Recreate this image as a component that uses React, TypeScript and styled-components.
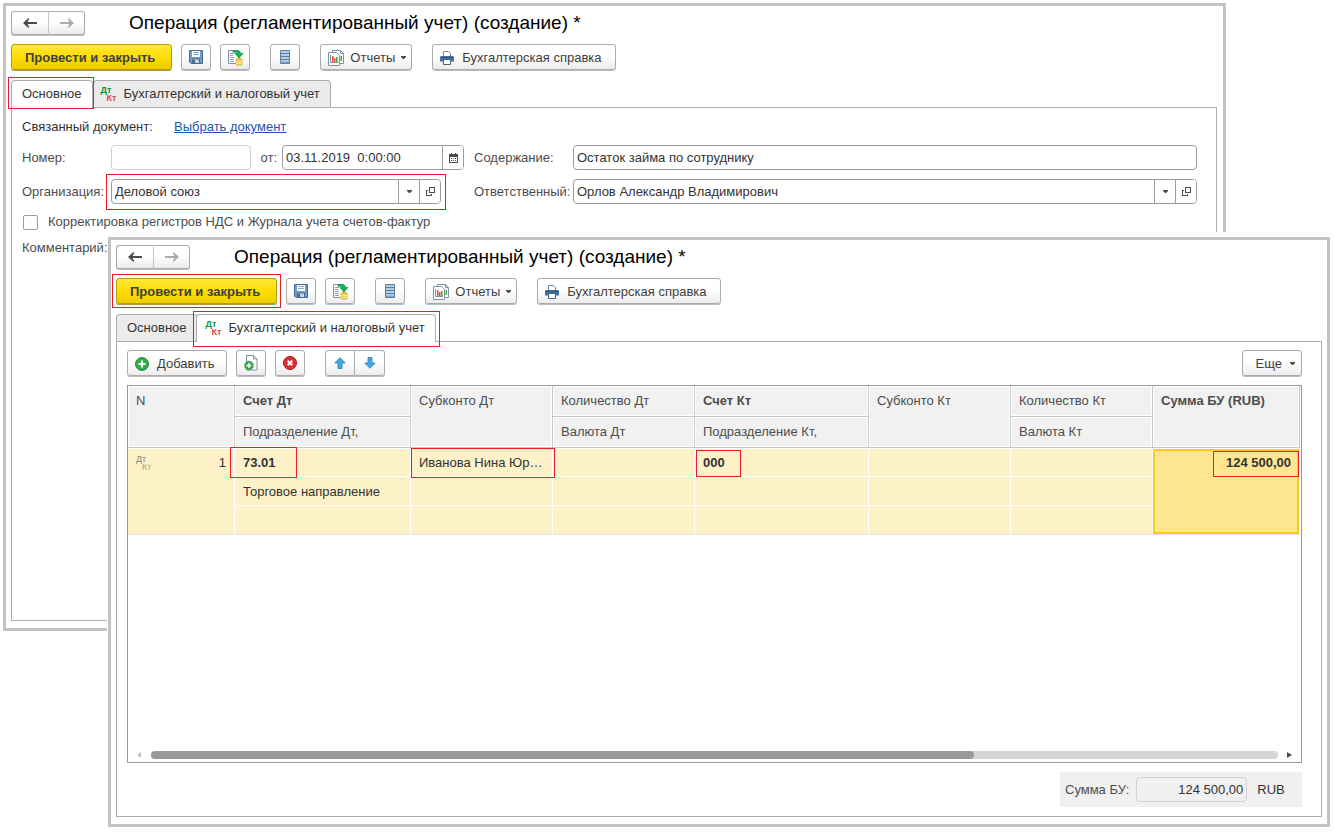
import React from "react";
import styled, { createGlobalStyle, css } from "styled-components";

const GlobalStyle = createGlobalStyle`
  *, *::before, *::after { box-sizing: border-box; }
  body { margin: 0; background: #fff; }
  body, button, input {
    font-family: "Liberation Sans", Arial, sans-serif;
    font-size: 13px;
    line-height: 16px;
    color: #404040;
  }
  svg { display: block; flex: none; }
`;

/* ---------- windows ---------- */

const Desktop = styled.main`
  display: grid;
  align-items: start;
  padding: 3px 4px 5px 3px;
`;

const WindowFrame = styled.section<{ $front?: boolean }>`
  grid-area: 1 / 1;
  min-width: 0;
  border: 3px solid #c3c3c3;
  background: #fff;
  padding: 4px 5px 7px;
  ${(p) =>
    p.$front
      ? css`
          margin: 234px 0 0 105px;
          box-shadow: 0 -4px 0 1px #fff;
          z-index: 1;
        `
      : css`
          margin-right: 104px;
          padding-right: 6px;
        `}
`;

const TitleBar = styled.header`
  display: flex;
  align-items: center;
  gap: 44px;
  height: 25px;
  margin-bottom: 9px;
`;

const Title = styled.h1`
  margin: 0;
  font-size: 19px;
  line-height: 24px;
  font-weight: 400;
  color: #000;
  white-space: nowrap;
`;

/* ---------- buttons ---------- */

const Button = styled.button<{ $primary?: boolean; $square?: boolean }>`
  display: flex;
  align-items: center;
  justify-content: ${(p) => (p.$square ? "center" : "flex-start")};
  gap: 8px;
  flex: none;
  height: 26px;
  width: ${(p) => (p.$square ? "30px" : "auto")};
  padding: ${(p) => (p.$square ? "0" : "1px 13px 0 7px")};
  border: 1px solid #ababab;
  border-radius: 3px;
  background: linear-gradient(#fff 45%, #ececec);
  box-shadow: 0 1px 0 #bdbdbd;
  white-space: nowrap;
  ${(p) =>
    p.$primary &&
    css`
      padding: 1px 16px 0 13px;
      border-color: #b89c00;
      background: linear-gradient(#ffe838, #fcdc00 55%, #eccb00);
      box-shadow: 0 1px 0 #a89a50;
      font-weight: 700;
    `}
`;

const ButtonGroup = styled.div`
  display: flex;
  & > button {
    border-radius: 3px 0 0 3px;
  }
  & > button + button {
    border-left: 0;
    border-radius: 0 3px 3px 0;
  }
`;

const NavGroup = styled(ButtonGroup)`
  & > button {
    width: 38px;
    height: 24px;
    border-right-color: #c6c6c6;
  }
  & > button + button {
    width: 36px;
    border-right-color: #ababab;
  }
`;

const Toolbar = styled.div`
  display: flex;
  gap: 20px;
  height: 26px;
`;

const CommandBar = styled(Toolbar)`
  margin-bottom: 10px;
`;

const ToolGroup = styled.div<{ $end?: boolean }>`
  display: flex;
  gap: 9px;
  margin-left: ${(p) => (p.$end ? "auto" : "0")};
`;

/* ---------- red call-out frames ---------- */

const Marked = styled.div<{ $inset: string }>`
  position: relative;
  display: flex;
  &::after {
    content: "";
    position: absolute;
    inset: ${(p) => p.$inset};
    border: 1px solid #ed1c24;
    pointer-events: none;
    z-index: 2;
  }
`;

/* ---------- tabs and panel ---------- */

const Tabs = styled.div`
  display: flex;
  height: 27px;
`;

const Tab = styled.button<{ $active?: boolean; $icon?: boolean }>`
  display: flex;
  align-items: center;
  gap: 6px;
  height: ${(p) => (p.$active ? "28px" : "27px")};
  padding: ${(p) => (p.$icon ? "0 10px 1px 7px" : "0 10px 1px")};
  border: 1px solid #adadad;
  border-bottom: 0;
  border-radius: 4px 4px 0 0;
  background: ${(p) => (p.$active ? "#fff" : "#ebebeb")};
  color: #333;
  white-space: nowrap;
  position: relative;
  z-index: ${(p) => (p.$active ? 1 : 0)};
`;

const DtKt = styled.span<{ $muted?: boolean }>`
  display: flex;
  flex-direction: column;
  width: 17px;
  font-size: 9px;
  line-height: 8px;
  font-weight: ${(p) => (p.$muted ? 400 : 700)};
  color: ${(p) => (p.$muted ? "#8a8570" : "#0a9347")};
  text-align: left;
  & > span + span {
    padding-left: 6px;
    color: ${(p) => (p.$muted ? "#a8a28a" : "#e0474c")};
  }
`;

const Panel = styled.div<{ $tall?: boolean }>`
  display: flex;
  flex-direction: column;
  gap: 9px;
  min-height: ${(p) => (p.$tall ? "514px" : "476px")};
  padding: 8px 19px 9px 10px;
  border: 1px solid #adadad;
`;

/* ---------- form ---------- */

const Row = styled.div<{ $line?: boolean }>`
  display: grid;
  grid-template-columns: 442px 1fr;
  column-gap: 10px;
  align-items: center;
  min-height: ${(p) => (p.$line ? "20px" : "25px")};
  padding-top: ${(p) => (p.$line ? "2px" : "0")};
`;

const Cell = styled.div<{ $label: number }>`
  display: grid;
  grid-template-columns: ${(p) => p.$label}px 1fr;
  align-items: center;
  min-width: 0;
`;

const Label = styled.label`
  color: #4d4d4d;
  white-space: nowrap;
`;

const Caption = styled.span`
  color: #333;
`;

const DocLink = styled.a`
  color: #1c55ae;
  text-decoration: underline;
`;

const Split = styled.div`
  display: flex;
  align-items: center;
  justify-content: space-between;
`;

const DateGroup = styled.div`
  display: flex;
  align-items: center;
  gap: 5px;
`;

const Field = styled.div<{ $width?: number; $dim?: boolean }>`
  display: flex;
  height: 25px;
  width: ${(p) => (p.$width ? p.$width + "px" : "100%")};
  border: 1px solid ${(p) => (p.$dim ? "#d0d0d0" : "#9c9c9c")};
  border-radius: 4px;
  overflow: hidden;
`;

const TextInput = styled.input<{ $right?: boolean }>`
  flex: 1;
  min-width: 0;
  width: 100%;
  padding: 0 3px;
  border: 0;
  outline: 0;
  background: transparent;
  color: #333;
  text-align: ${(p) => (p.$right ? "right" : "left")};
`;

const FieldButton = styled.button`
  display: flex;
  align-items: center;
  justify-content: center;
  width: 21px;
  padding: 0;
  border: 0;
  border-left: 1px solid #9c9c9c;
  background: #fff;
`;

const CheckLabel = styled.label`
  display: flex;
  align-items: center;
  gap: 10px;
  height: 18px;
  padding-left: 1px;
  color: #4d4d4d;
`;

const CheckBox = styled.input`
  appearance: none;
  width: 15px;
  height: 15px;
  margin: 0;
  border: 1px solid #9c9c9c;
  border-radius: 2px;
  background: #fff;
`;

/* ---------- table ---------- */

const TableBox = styled.div`
  display: flex;
  flex-direction: column;
  justify-content: space-between;
  flex: 1;
  min-height: 378px;
  padding: 0 1px 3px 0;
  border: 1px solid #999;
`;

const Table = styled.table`
  width: 100%;
  table-layout: fixed;
  border-collapse: separate;
  border-spacing: 0;
`;

const Th = styled.th<{ $strong?: boolean }>`
  height: 31px;
  padding: 7px 8px 6px;
  vertical-align: top;
  text-align: left;
  white-space: nowrap;
  font-weight: ${(p) => (p.$strong ? 700 : 400)};
  color: #4d4d4d;
  background: #f1f1f1;
  border: 1px solid #c8c8c8;
  border-width: 0 1px 1px 0;
  box-shadow: inset 0 0 0 1px #fff;
`;

const Td = styled.td<{ $first?: boolean; $last?: boolean; $strong?: boolean; $active?: boolean }>`
  height: ${(p) => (p.$active ? "87px" : "29px")};
  padding: ${(p) => (p.$first ? "6px 8px 5px" : "7px 8px 5px")};
  vertical-align: top;
  white-space: nowrap;
  color: #333;
  font-weight: ${(p) => (p.$strong ? 700 : 400)};
  background: #fdf1c7;
  border: 1px solid #fff;
  border-width: ${(p) => (p.$first ? "1px 1px 1px 0" : "0 1px 1px 0")};
  border-bottom-color: ${(p) => (p.$last ? "#e4e4e4" : "#fff")};
  position: relative;
  ${(p) =>
    p.$active &&
    css`
      background: #fee590;
      box-shadow: inset 0 0 0 2px #fcc91f;
      text-align: right;
    `}
`;

const CellMark = styled.span<{ $inset: string }>`
  &::after {
    content: "";
    position: absolute;
    inset: ${(p) => p.$inset};
    border: 1px solid #ed1c24;
    z-index: 2;
  }
`;

const ScrollBar = styled.div`
  display: flex;
  align-items: center;
  gap: 9px;
  padding: 0 8px 0 9px;
`;

const Track = styled.div`
  flex: 1;
  height: 8px;
  border-radius: 4px;
  background: #d5d5d5;
`;

const Thumb = styled.div`
  width: 73%;
  height: 8px;
  border-radius: 4px;
  background: #999;
`;

const Totals = styled.div`
  display: flex;
  align-items: center;
  align-self: flex-end;
  gap: 7px;
  width: 242px;
  height: 35px;
  padding-left: 5px;
  background: #f0f0f0;
`;

const Currency = styled.span`
  padding-left: 3px;
  color: #333;
`;

/* ---------- icons ---------- */

const NavArrow = ({ color, flip }: { color: string; flip?: boolean }) => (
  <svg width="14" height="10" viewBox="0 0 14 10" fill={color}>
    <path d={flip ? "M14 5 8.500 0 7.800 1 9.500 4H0v2h9.500L7.800 9l.7 1z" : "M0 5 5.500 0l.7 1L4.500 4H14v2H4.500l1.700 3-.7 1z"} />
  </svg>
);

const SaveIcon = () => (
  <svg width="14" height="14" viewBox="0 0 14 14">
    <path d="M.5.5h13v13H2L.5 12z" fill="#6f9cc9" stroke="#446a94" />
    <path d="M3 1h8v6H3z" fill="#fff" />
    <path d="M4 2.500h6M4 4.500h6" stroke="#8ba9c8" />
    <path d="M3.500 9h7v4.500h-7z" fill="#c9d3dd" stroke="#446a94" />
    <path d="M4 10h2v3H4z" fill="#446a94" />
  </svg>
);

const PostIcon = () => (
  <svg width="17" height="17" viewBox="0 0 17 17">
    <path d="M1.500 1.500h10v13h-10z" fill="#fff" stroke="#7f93a8" />
    <path d="M3 4.500h4M3 6.500h3M3 8.500h4M3 10.500h4M3 12.500h4" stroke="#8ba0b5" />
    <path d="M6 1.500h4c2.600 0 3.500 1.200 3.500 3h2.500l-4 4.500-4-4.500h2.500c0-1-.5-1.200-1.500-1.200H6z" fill="#17b35a" stroke="#0b8e42" strokeWidth=".7" />
    <path d="M9 10.500c0-1.200 6-1.200 6 0v4.700c0 1.300-6 1.300-6 0z" fill="#f3c840" stroke="#cf9c1c" strokeWidth=".7" />
    <path d="M9 12c1 1 5 1 6 0M9 14c1 1 5 1 6 0" fill="none" stroke="#fff2b5" />
  </svg>
);

const ListIcon = () => (
  <svg width="10" height="14" viewBox="0 0 10 14">
    <path d="M.5.5h9v13h-9z" fill="#a9c4dc" stroke="#5c7f9f" />
    <path d="M0 3.500h10M0 6.500h10M0 9.500h10M0 12h10" stroke="#5c7f9f" />
    <path d="M1 2h8M1 5h8M1 8h8M1 11h8" stroke="#c3d8ea" />
  </svg>
);

const ReportIcon = () => (
  <svg width="16" height="16" viewBox="0 0 16 16">
    <path d="M4.500.5h8l3 3v10h-11z" fill="#fff" stroke="#7f93a8" />
    <path d="M12.500.5v3h3" fill="none" stroke="#7f93a8" />
    <path d="M12.500 6H14v5h-1.500z" fill="#3fae49" />
    <path d="M.5 2.500h8l3 3v10H.5z" fill="#fff" stroke="#7f93a8" />
    <path d="M2.500 5v7.500H10" fill="none" stroke="#7f93a8" />
    <path d="M4 6h1.500v6H4z" fill="#e8472b" />
    <path d="M6 8h1.500v4H6z" fill="#d8573a" />
    <path d="M8 7h1.500v5H8z" fill="#2fae3f" />
  </svg>
);

const PrinterIcon = () => (
  <svg width="14" height="14" viewBox="0 0 14 14">
    <path d="M3.500 5.500v-5h5l2 2v3" fill="#fff" stroke="#6f8aa5" />
    <path d="M1 5h12l1 1v4.500H0V6z" fill="#45719d" />
    <path d="M1 6.500h12" stroke="#2f5378" />
    <path d="M3.500 8.500h7v5h-7z" fill="#fff" stroke="#3b638c" />
  </svg>
);

const Caret = ({ color = "#4d4d4d" }: { color?: string }) => (
  <svg width="5" height="3" viewBox="0 0 5 3" fill={color}>
    <path d="M0 0h5v1L3 3H2L0 1z" />
  </svg>
);

const CalendarIcon = () => (
  <svg width="9" height="10" viewBox="0 0 9 10" shapeRendering="crispEdges">
    <path d="M0 1h9v9H0zM1 4v5h7V4z" fill="#4d4d4d" fillRule="evenodd" />
    <path d="M2 0h1v1H2zM6 0h1v1H6zM2 5h1v1H2zM4 5h1v1H4zM6 5h1v1H6zM2 7h1v1H2zM4 7h1v1H4zM6 7h1v1H6z" fill="#4d4d4d" />
  </svg>
);

const OpenIcon = () => (
  <svg width="9" height="9" viewBox="0 0 9 9" shapeRendering="crispEdges" fill="none" stroke="#4d4d4d">
    <path d="M3.500.5h5v5h-5zM2 3.500H.5v5h5V7" />
  </svg>
);

const AddIcon = () => (
  <svg width="14" height="14" viewBox="0 0 14 14">
    <circle cx="7" cy="7" r="6.500" fill="#35ac4b" stroke="#1f8a39" />
    <path d="M7 3.500v7M3.500 7h7" stroke="#fff" strokeWidth="2" />
  </svg>
);

const CopyIcon = () => (
  <svg width="14" height="16" viewBox="0 0 14 16">
    <path d="M2.500.5h7l3.500 3.500v11H2.500z" fill="#fff" stroke="#7f93a8" />
    <path d="M9.500.5V4H13" fill="none" stroke="#7f93a8" />
    <circle cx="5" cy="10.500" r="4.300" fill="#35ac4b" stroke="#1f8a39" strokeWidth=".7" />
    <path d="M5 8v5M2.500 10.500h5" stroke="#fff" strokeWidth="1.400" />
  </svg>
);

const DeleteIcon = () => (
  <svg width="14" height="14" viewBox="0 0 14 14">
    <circle cx="7" cy="7" r="6.500" fill="#dc2b35" stroke="#b5121d" />
    <path d="m4.700 4.700 4.600 4.600m0-4.600L4.700 9.300" stroke="#fff" strokeWidth="2" />
  </svg>
);

const MoveArrow = ({ down }: { down?: boolean }) => (
  <svg width="12" height="12" viewBox="0 0 12 12" fill="#41a9e8" stroke="#2478b5">
    <path d={down ? "M6 11.300.8 6H4V.5h4V6h3.200z" : "M6 .7.8 6H4v5.500h4V6h3.200z"} strokeWidth=".8" />
  </svg>
);

const ScrollArrow = ({ left }: { left?: boolean }) => (
  <svg width="5" height="6" viewBox="0 0 5 6" fill={left ? "#c0c0c0" : "#4d4d4d"}>
    <path d={left ? "M4 0v6L0 3z" : "M0 0v6l5-3z"} />
  </svg>
);

/* ---------- shared window parts ---------- */

const MenuButton = styled(Button)`
  gap: 6px;
  padding: 1px 5px 0 7px;
`;

const DtKtMark = ({ muted }: { muted?: boolean }) => (
  <DtKt $muted={muted}>
    <span>Дт</span>
    <span>Кт</span>
  </DtKt>
);

const WindowHead = () => (
  <TitleBar>
    <NavGroup>
      <Button $square aria-label="Назад"><NavArrow color="#4a4a4a" /></Button>
      <Button $square aria-label="Вперед"><NavArrow color="#aaa" flip /></Button>
    </NavGroup>
    <Title>Операция (регламентированный учет) (создание) *</Title>
  </TitleBar>
);

const Commands = ({ marked }: { marked?: boolean }) => {
  const post = <Button $primary>Провести и закрыть</Button>;
  return (
    <CommandBar>
      <ToolGroup>
        {marked ? <Marked $inset="-4px">{post}</Marked> : post}
        <Button $square aria-label="Записать"><SaveIcon /></Button>
        <Button $square aria-label="Провести"><PostIcon /></Button>
      </ToolGroup>
      <ToolGroup><Button $square aria-label="Список"><ListIcon /></Button></ToolGroup>
      <ToolGroup><MenuButton><ReportIcon />Отчеты<Caret /></MenuButton></ToolGroup>
      <ToolGroup><Button><PrinterIcon />Бухгалтерская справка</Button></ToolGroup>
    </CommandBar>
  );
};

const ChoiceField = ({ id, value }: { id: string; value: string }) => (
  <Field>
    <TextInput id={id} defaultValue={value} />
    <FieldButton aria-label="Выбрать"><Caret /></FieldButton>
    <FieldButton aria-label="Открыть"><OpenIcon /></FieldButton>
  </Field>
);

const OrgCell = styled.div`
  padding-right: 23px;
`;

const MainWindow = () => (
  <WindowFrame>
    <WindowHead />
    <Commands />
    <Tabs>
      <Marked $inset="-3px -1px -2px -3px">
        <Tab $active>Основное</Tab>
      </Marked>
      <Tab $icon><DtKtMark />Бухгалтерский и налоговый учет</Tab>
    </Tabs>
    <Panel $tall>
      <Row $line>
        <Cell $label={152}>
          <Caption>Связанный документ:</Caption>
          <DocLink href="#document">Выбрать документ</DocLink>
        </Cell>
      </Row>
      <Row>
        <Cell $label={89}>
          <Label htmlFor="number">Номер:</Label>
          <Split>
            <Field $width={140} $dim><TextInput id="number" /></Field>
            <DateGroup>
              <Label htmlFor="date">от:</Label>
              <Field $width={182}>
                <TextInput id="date" defaultValue="03.11.2019  0:00:00" />
                <FieldButton aria-label="Календарь"><CalendarIcon /></FieldButton>
              </Field>
            </DateGroup>
          </Split>
        </Cell>
        <Cell $label={99}>
          <Label htmlFor="content">Содержание:</Label>
          <Field><TextInput id="content" defaultValue="Остаток займа по сотруднику" /></Field>
        </Cell>
      </Row>
      <Row>
        <Cell $label={89}>
          <Label htmlFor="org">Организация:</Label>
          <OrgCell>
            <Marked $inset="-5px -5px -6px -5px"><ChoiceField id="org" value="Деловой союз" /></Marked>
          </OrgCell>
        </Cell>
        <Cell $label={99}>
          <Label htmlFor="resp">Ответственный:</Label>
          <ChoiceField id="resp" value="Орлов Александр Владимирович" />
        </Cell>
      </Row>
      <CheckLabel>
        <CheckBox type="checkbox" />
        Корректировка регистров НДС и Журнала учета счетов-фактур
      </CheckLabel>
      <Label>Комментарий:</Label>
    </Panel>
  </WindowFrame>
);

const EntryTab = styled(Tab)`
  margin-left: -2px;
  padding-left: 9px;
`;

const RowNumber = styled.div`
  display: flex;
  justify-content: space-between;
  height: 16px;
`;

const AddButton = styled(Button)`
  padding-right: 12px;
`;

const MoreButton = styled(MenuButton)`
  gap: 8px;
  padding: 1px 6px 0 13px;
`;

const EntriesWindow = () => (
  <WindowFrame $front>
    <WindowHead />
    <Commands marked />
    <Tabs>
      <Tab>Основное</Tab>
      <Marked $inset="-3px -4px -6px -5px">
        <EntryTab $active $icon><DtKtMark />Бухгалтерский и налоговый учет</EntryTab>
      </Marked>
    </Tabs>
    <Panel>
      <Toolbar>
        <ToolGroup>
          <AddButton><AddIcon />Добавить</AddButton>
          <Button $square aria-label="Скопировать"><CopyIcon /></Button>
          <Button $square aria-label="Удалить"><DeleteIcon /></Button>
        </ToolGroup>
        <ToolGroup>
          <ButtonGroup>
            <Button $square aria-label="Вверх"><MoveArrow /></Button>
            <Button $square aria-label="Вниз"><MoveArrow down /></Button>
          </ButtonGroup>
        </ToolGroup>
        <ToolGroup $end><MoreButton>Еще<Caret /></MoreButton></ToolGroup>
      </Toolbar>
      <TableBox>
        <Table>
          <colgroup>
            {[107, 176, 142, 142, 174, 142, 142].map((w, i) => <col key={i} width={w} />)}
            <col />
          </colgroup>
          <thead>
            <tr>
              <Th rowSpan={2}>N</Th>
              <Th $strong>Счет Дт</Th>
              <Th rowSpan={2}>Субконто Дт</Th>
              <Th>Количество Дт</Th>
              <Th $strong>Счет Кт</Th>
              <Th rowSpan={2}>Субконто Кт</Th>
              <Th>Количество Кт</Th>
              <Th $strong rowSpan={2}>Сумма БУ (RUB)</Th>
            </tr>
            <tr>
              <Th>Подразделение Дт,</Th>
              <Th>Валюта Дт</Th>
              <Th>Подразделение Кт,</Th>
              <Th>Валюта Кт</Th>
            </tr>
          </thead>
          <tbody>
            <tr>
              <Td rowSpan={3} $first $last><RowNumber><DtKtMark muted />1</RowNumber></Td>
              <Td $first $strong><CellMark $inset="-2px 113px -2px -5px">73.01</CellMark></Td>
              <Td $first><CellMark $inset="-1px -3px -2px 0">Иванова Нина Юр…</CellMark></Td>
              <Td $first />
              <Td $first $strong><CellMark $inset="1px 127px -1px 1px">000</CellMark></Td>
              <Td $first />
              <Td $first />
              <Td rowSpan={3} $first $last $strong $active>
                <CellMark $inset="2px 0 57px 60px">124 500,00</CellMark>
              </Td>
            </tr>
            <tr>
              <Td>Торговое направление</Td>
              <Td /><Td /><Td /><Td /><Td />
            </tr>
            <tr>
              <Td $last /><Td $last /><Td $last /><Td $last /><Td $last /><Td $last />
            </tr>
          </tbody>
        </Table>
        <ScrollBar>
          <ScrollArrow left />
          <Track><Thumb /></Track>
          <ScrollArrow />
        </ScrollBar>
      </TableBox>
      <Totals>
        <Label htmlFor="total">Сумма БУ:</Label>
        <Field $width={111} $dim><TextInput id="total" $right readOnly defaultValue="124 500,00" /></Field>
        <Currency>RUB</Currency>
      </Totals>
    </Panel>
  </WindowFrame>
);

export default function App() {
  return (
    <>
      <GlobalStyle />
      <Desktop>
        <MainWindow />
        <EntriesWindow />
      </Desktop>
    </>
  );
}
